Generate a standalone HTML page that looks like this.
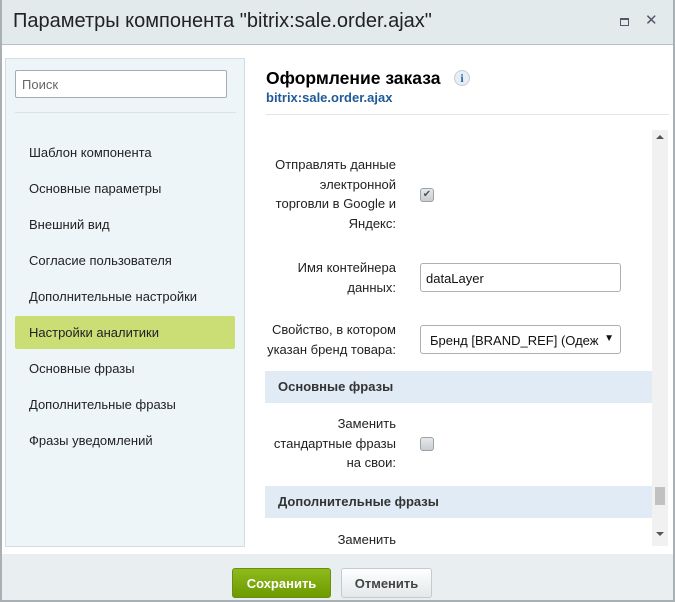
<!DOCTYPE html>
<html><head><meta charset="utf-8"><style>
*{box-sizing:border-box;margin:0;padding:0}
body{width:675px;height:602px;overflow:hidden;font-family:"Liberation Sans",Arial,sans-serif;background:#fff;position:relative}
.frame{position:absolute;left:0;top:0;width:675px;height:602px;border:1px solid #a8b0b3;border-width:0 2px 2px 2px}
.title{position:absolute;left:0;top:0;width:675px;height:45px;background:#e2eaec;border-bottom:1px solid #b8c0c3}
.title span{position:absolute;left:13px;top:10px;font-size:20px;color:#222}
.side{position:absolute;left:5px;top:58px;width:240px;height:489px;background:#eef5f9;border:1px solid #d3dde2}
.search{position:absolute;left:9px;top:11px;width:212px;height:28px;background:#fff;border:1px solid #a5adb2;border-radius:2px;font-size:13px;color:#666;padding:6px 6px}
.sep{position:absolute;left:9px;top:53px;width:221px;height:1px;background:#dbe3e7}
.item{position:absolute;left:23px;font-size:13px;color:#222}
.hl{position:absolute;left:9px;top:257px;width:220px;height:33px;background:#cbdd75;border-radius:2px}
.h1{position:absolute;left:266px;top:68px;font-size:17.5px;font-weight:bold;color:#000}
.info{position:absolute;left:454px;top:70px;width:16px;height:16px;border-radius:50%;background:#e8eef3;border:1px solid #c5ced5;color:#2a6aa5;font:bold 12px "Liberation Serif",serif;text-align:center;line-height:14px}
.h2{position:absolute;left:266px;top:90px;font-size:13px;font-weight:bold;color:#1f5a97}
.hr{position:absolute;left:266px;top:114px;width:403px;height:1px;background:#e3e6e8}
.lbl{position:absolute;right:279px;text-align:right;font-size:13px;color:#222;line-height:19.5px}
.cb{position:absolute;left:420px;width:14px;height:14px;border:1px solid #9aa3a8;border-radius:3px;background:linear-gradient(#e6e9eb,#c9cdd0)}
.inp{position:absolute;left:420px;width:201px;height:29px;border:1px solid #a9b1b6;border-radius:3px;background:#fff;font-size:13px;color:#111;padding:7px 5px}
.sec{position:absolute;left:265px;width:387px;height:32px;background:#e0ebf6;font-size:13px;font-weight:bold;color:#333;padding:8px 13px}
.sb{position:absolute;left:652px;top:130px;width:16px;height:416px;background:#f1f1f1}
.footer{position:absolute;left:2px;top:554px;width:671px;height:46px;background:#e9eef0}
.btn{position:absolute;top:14px;height:30px;border-radius:3px;font-size:13px;font-weight:bold;text-align:center;line-height:29px}
</style></head><body>
<div class="title"><span>Параметры компонента "bitrix:sale.order.ajax"</span>
<div style="position:absolute;left:620px;top:18px;width:9px;height:8px;border:1px solid #556;border-top-width:2px"></div>
<div style="position:absolute;left:645px;top:11px;font-size:15px;color:#556">✕</div></div>
<div class="side">
<div class="search">Поиск</div><div class="sep"></div>
<div class="hl"></div>
<div class="item" style="top:86px">Шаблон компонента</div>
<div class="item" style="top:122px">Основные параметры</div>
<div class="item" style="top:158px">Внешний вид</div>
<div class="item" style="top:194px">Согласие пользователя</div>
<div class="item" style="top:230px">Дополнительные настройки</div>
<div class="item" style="top:266px">Настройки аналитики</div>
<div class="item" style="top:302px">Основные фразы</div>
<div class="item" style="top:338px">Дополнительные фразы</div>
<div class="item" style="top:374px">Фразы уведомлений</div>
</div>
<div class="h1">Оформление заказа</div><div class="info">i</div>
<div class="h2">bitrix:sale.order.ajax</div>
<div class="hr"></div>
<div class="lbl" style="top:155px">Отправлять данные<br>электронной<br>торговли в Google и<br>Яндекс:</div>
<div class="cb" style="top:188px;color:#555;font-size:10px;line-height:12px;text-align:center">✔</div>
<div class="lbl" style="top:258px">Имя контейнера<br>данных:</div>
<div class="inp" style="top:263px">dataLayer</div>
<div class="lbl" style="top:320px">Свойство, в котором<br>указан бренд товара:</div>
<div class="inp" style="top:325px;padding-left:9px">Бренд [BRAND_REF] (Одеж<span style="position:absolute;right:6px;top:7px;font-size:10px">▼</span></div>
<div class="sec" style="top:371px">Основные фразы</div>
<div class="lbl" style="top:414px">Заменить<br>стандартные фразы<br>на свои:</div>
<div class="cb" style="top:437px"></div>
<div class="sec" style="top:486px">Дополнительные фразы</div>
<div style="position:absolute;left:265px;top:530px;width:387px;height:16px;overflow:hidden"><div class="lbl" style="top:0;right:256px">Заменить</div></div>
<div class="sb"><div style="position:absolute;left:4px;top:5px;border:4px solid transparent;border-bottom:4px solid #555;border-top:0"></div>
<div style="position:absolute;left:3px;top:357px;width:10px;height:18px;background:#c1c1c1"></div>
<div style="position:absolute;left:4px;top:402px;border:4px solid transparent;border-top:4px solid #555;border-bottom:0"></div></div>
<div class="footer">
<div class="btn" style="left:230px;width:99px;background:linear-gradient(#8fba1b,#6c9a00);color:#fff;border:1px solid #6a8f10">Сохранить</div>
<div class="btn" style="left:339px;width:91px;background:linear-gradient(#fff,#e3e8ea);color:#444;border:1px solid #c4cacd">Отменить</div>
</div>
<div class="frame"></div>
</body></html>
